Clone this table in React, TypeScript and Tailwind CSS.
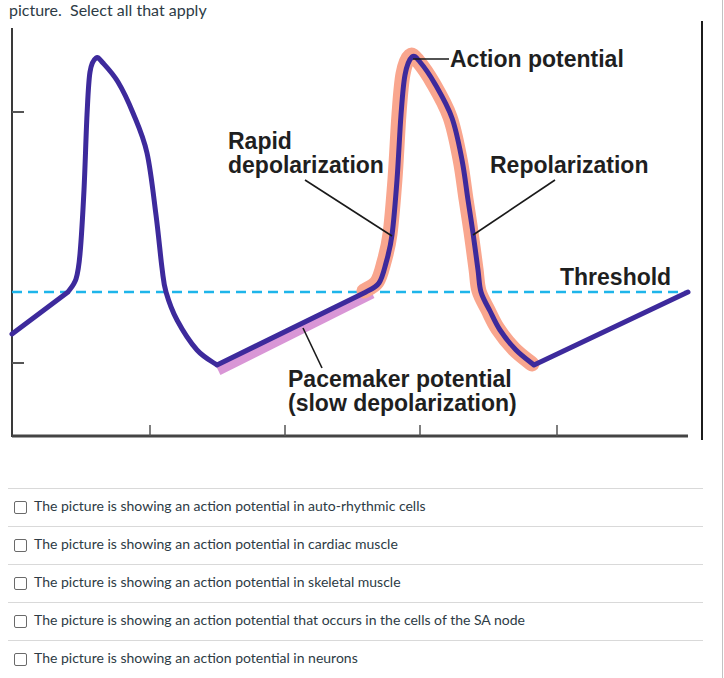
import React from 'react';

type Pt = [number, number];

// catmull-rom through the points, as cubic beziers
function smooth(pts: Pt[], start = true): string {
  let d = start ? `M${pts[0][0]},${pts[0][1]}` : '';
  for (let i = 0; i < pts.length - 1; i++) {
    const p0 = pts[i - 1] || pts[i];
    const p1 = pts[i];
    const p2 = pts[i + 1];
    const p3 = pts[i + 2] || p2;
    const c1x = p1[0] + (p2[0] - p0[0]) / 6;
    const c1y = p1[1] + (p2[1] - p0[1]) / 6;
    const c2x = p2[0] - (p3[0] - p1[0]) / 6;
    const c2y = p2[1] - (p3[1] - p1[1]) / 6;
    d += ` C${c1x},${c1y} ${c2x},${c2y} ${p2[0]},${p2[1]}`;
  }
  return d;
}

const firstSpike: Pt[] = [
  [68, 292], [76, 279], [80, 254], [84, 190], [87, 115], [90, 72], [96, 58], [103, 63],
  [118, 82], [133, 113], [147, 153], [156, 215], [162, 268], [166, 292], [177, 320],
  [197, 350], [217, 365],
];

const secondSpike: Pt[] = [
  [366, 292], [379, 283], [386, 263], [392, 235], [397, 180], [401, 115], [405, 75],
  [412, 57], [420, 62], [435, 84], [452, 118], [462, 160], [468, 200], [473, 233],
  [478, 270], [481, 292], [490, 311], [500, 330], [516, 350], [534, 365],
];

const options = [
  'The picture is showing an action potential in auto-rhythmic cells',
  'The picture is showing an action potential in cardiac muscle',
  'The picture is showing an action potential in skeletal muscle',
  'The picture is showing an action potential that occurs in the cells of the SA node',
  'The picture is showing an action potential in neurons',
];

function Chart() {
  const purple = `M12,334 L68,292 ${smooth(firstSpike, false)} L366,292 ${smooth(secondSpike, false)} L688,292`;
  const label = { fontFamily: '"Liberation Sans", Arial, sans-serif', fontWeight: 700, fontSize: 23 };

  return (
    <svg width="724" height="468" viewBox="0 20 724 468" className="block">
      {/* frame */}
      <line x1="12" y1="28" x2="12" y2="437" stroke="#3a3a3a" strokeWidth="2" />
      <line x1="12" y1="112" x2="24" y2="112" stroke="#555" strokeWidth="2" />
      <line x1="12" y1="363" x2="24" y2="363" stroke="#555" strokeWidth="2" />
      <line x1="12" y1="436" x2="688" y2="436" stroke="#444" strokeWidth="3" />
      {[150, 285, 420, 557].map((x) => (
        <line key={x} x1={x} y1="425" x2={x} y2="436" stroke="#555" strokeWidth="1.5" />
      ))}
      <line x1="702" y1="21" x2="702" y2="440" stroke="#1c1c1c" strokeWidth="2" />

      {/* threshold */}
      <line x1="12" y1="292" x2="688" y2="292" stroke="#1eb5ea" strokeWidth="2.5" strokeDasharray="10 6" />

      {/* highlights */}
      <path d="M218,368 L372,291" stroke="#d996d6" strokeWidth="11" strokeLinecap="butt" fill="none" transform="translate(0,2)" />
      <path d={smooth(secondSpike)} stroke="#f9a68e" strokeWidth="15" strokeLinecap="round" strokeLinejoin="round" fill="none" transform="translate(-2,-1)" />

      {/* trace */}
      <path d={purple} stroke="#3d2a9c" strokeWidth="5" strokeLinejoin="round" strokeLinecap="round" fill="none" />

      {/* leaders */}
      <g stroke="#1a1a1a" strokeWidth="1.6">
        <line x1="413" y1="59" x2="449" y2="59" />
        <line x1="305" y1="180" x2="392" y2="236" />
        <line x1="555" y1="180" x2="473" y2="235" />
        <line x1="303" y1="328" x2="322" y2="368" />
      </g>

      <g fill="#1f1f1f" style={label}>
        <text x="450" y="67">Action potential</text>
        <text x="228" y="149">Rapid</text>
        <text x="228" y="173">depolarization</text>
        <text x="490" y="173">Repolarization</text>
        <text x="560" y="285">Threshold</text>
        <text x="288" y="387">Pacemaker potential</text>
        <text x="288" y="411">(slow depolarization)</text>
      </g>
    </svg>
  );
}

export default function App() {
  return (
    <div className="w-[723px] h-[678px] overflow-hidden bg-white border-r border-[#c2c2c2] text-[#2d3b45] font-['Lato',sans-serif]">
      <p className="h-[20px] pl-[9px] text-[16px] leading-[19px] whitespace-pre">picture.  Select all that apply</p>
      <Chart />
      <ul className="ml-[8px] w-[695px]">
        {options.map((o) => (
          <li key={o} className="h-[38px] border-t border-[#d9d9d9] flex items-center pl-[6px] gap-[7px]">
            <span className="w-[13px] h-[13px] shrink-0 rounded-[2px] border border-[#6a6a6a] bg-white" />
            <span className="text-[14px] leading-[18px] mb-[3px]">{o}</span>
          </li>
        ))}
      </ul>
    </div>
  );
}
